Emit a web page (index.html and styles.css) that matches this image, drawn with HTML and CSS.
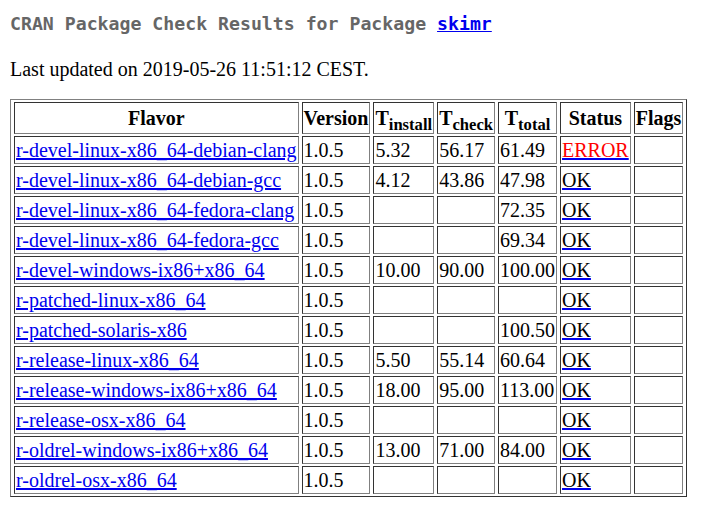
FILE: index.html
```html
<!DOCTYPE html>
<html>
<head>
<meta charset="utf-8">
<title>CRAN Package Check Results for Package skimr</title>
<link rel="stylesheet" href="styles.css">
</head>
<body>
<h2 class="title">CRAN Package Check Results for Package <a href="#" class="pkg">skimr</a></h2>
<p class="updated">Last updated on 2019-05-26 11:51:12 CEST.</p>
<table class="results">
<tr>
<th>Flavor</th>
<th>Version</th>
<th>T<sub>install</sub></th>
<th>T<sub>check</sub></th>
<th>T<sub>total</sub></th>
<th>Status</th>
<th>Flags</th>
</tr>
<tr><td><a href="#">r-devel-linux-x86_64-debian-clang</a></td><td>1.0.5</td><td>5.32</td><td>56.17</td><td>61.49</td><td><a href="#"><span class="err">ERROR</span></a></td><td></td></tr>
<tr><td><a href="#">r-devel-linux-x86_64-debian-gcc</a></td><td>1.0.5</td><td>4.12</td><td>43.86</td><td>47.98</td><td><a href="#"><span class="ok">OK</span></a></td><td></td></tr>
<tr><td><a href="#">r-devel-linux-x86_64-fedora-clang</a></td><td>1.0.5</td><td></td><td></td><td>72.35</td><td><a href="#"><span class="ok">OK</span></a></td><td></td></tr>
<tr><td><a href="#">r-devel-linux-x86_64-fedora-gcc</a></td><td>1.0.5</td><td></td><td></td><td>69.34</td><td><a href="#"><span class="ok">OK</span></a></td><td></td></tr>
<tr><td><a href="#">r-devel-windows-ix86+x86_64</a></td><td>1.0.5</td><td>10.00</td><td>90.00</td><td>100.00</td><td><a href="#"><span class="ok">OK</span></a></td><td></td></tr>
<tr><td><a href="#">r-patched-linux-x86_64</a></td><td>1.0.5</td><td></td><td></td><td></td><td><a href="#"><span class="ok">OK</span></a></td><td></td></tr>
<tr><td><a href="#">r-patched-solaris-x86</a></td><td>1.0.5</td><td></td><td></td><td>100.50</td><td><a href="#"><span class="ok">OK</span></a></td><td></td></tr>
<tr><td><a href="#">r-release-linux-x86_64</a></td><td>1.0.5</td><td>5.50</td><td>55.14</td><td>60.64</td><td><a href="#"><span class="ok">OK</span></a></td><td></td></tr>
<tr><td><a href="#">r-release-windows-ix86+x86_64</a></td><td>1.0.5</td><td>18.00</td><td>95.00</td><td>113.00</td><td><a href="#"><span class="ok">OK</span></a></td><td></td></tr>
<tr><td><a href="#">r-release-osx-x86_64</a></td><td>1.0.5</td><td></td><td></td><td></td><td><a href="#"><span class="ok">OK</span></a></td><td></td></tr>
<tr><td><a href="#">r-oldrel-windows-ix86+x86_64</a></td><td>1.0.5</td><td>13.00</td><td>71.00</td><td>84.00</td><td><a href="#"><span class="ok">OK</span></a></td><td></td></tr>
<tr><td><a href="#">r-oldrel-osx-x86_64</a></td><td>1.0.5</td><td></td><td></td><td></td><td><a href="#"><span class="ok">OK</span></a></td><td></td></tr>
</table>
</body>
</html>
```

FILE: styles.css
```css
body {
  margin: 10px;
  font-family: "Liberation Serif", "Times New Roman", serif;
  font-size: 20px;
  color: #000;
  background: #fff;
}
a { color: #0000ee; }
.title {
  font-family: "DejaVu Sans Mono", "Liberation Mono", monospace;
  font-size: 18.2px;
  font-weight: bold;
  color: #666666;
  margin: 3px 0 24px 0;
}
.title .pkg { color: #0000ee; }
.updated {
  margin: 0 0 18px 0;
}
.results {
  border-collapse: separate;
  border-spacing: 3px 2px;
  border: 1px solid;
  border-color: #808080 #333333 #333333 #808080;
}
.results th,
.results td {
  border: 1px solid;
  border-color: #333333 #808080 #808080 #333333;
  padding: 1px 1px;
  line-height: 24px;
  white-space: nowrap;
}
.results th {
  font-weight: bold;
  text-align: center;
  line-height: 28px;
}
.results td { text-align: left; }
.results sub {
  font-size: 0.83em;
  line-height: 0;
  vertical-align: -0.3em;
}
.ok { color: #000; }
.err { color: #ff0000; }
```
